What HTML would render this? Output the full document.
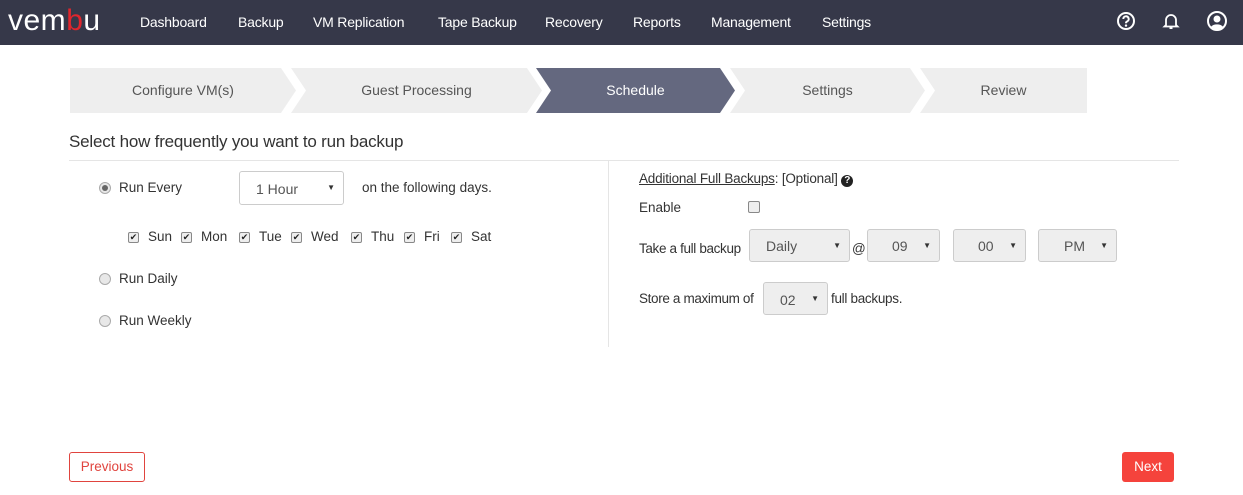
<!DOCTYPE html>
<html><head><style>
*{box-sizing:border-box;margin:0;padding:0}
body{width:1243px;height:495px;background:#fff;font-family:"Liberation Sans",sans-serif;color:#333;position:relative;overflow:hidden;font-size:13.5px}
.nav{position:absolute;left:0;top:0;width:1243px;height:45px;background:#363849}
.nav .it{position:absolute;top:14px;color:#fff;font-size:14px;letter-spacing:-0.2px}
.logo{position:absolute;left:8px;top:4px;color:#fff;font-size:30px;letter-spacing:0.5px}
.st{position:absolute;top:68px;height:45px;background:#eeeeee;color:#555;font-size:14px;line-height:45px;text-align:center}
.a{position:absolute}
.sel{position:absolute;border:1px solid #ccc;border-radius:3px;background:#eee;font-size:14px;color:#555}
.sel:after{content:"▼";position:absolute;right:8px;top:11px;font-size:8px;color:#333}
.cb{position:absolute;width:11px;height:11px;border:1px solid #888;border-radius:2px;background:#eee;font-size:9px;line-height:9px;text-align:center;color:#222}
.rd{position:absolute;width:12px;height:12px;border-radius:50%;border:1px solid #aaa;background:#e8e8e8}
</style></head><body>
<div class="nav">
<div class="logo">vem<span style="color:#e0262d">b</span>u</div>
<span class="it" style="left:140px">Dashboard</span>
<span class="it" style="left:238px">Backup</span>
<span class="it" style="left:313px">VM Replication</span>
<span class="it" style="left:438px">Tape Backup</span>
<span class="it" style="left:545px">Recovery</span>
<span class="it" style="left:633px">Reports</span>
<span class="it" style="left:711px">Management</span>
<span class="it" style="left:822px">Settings</span>
<svg class="a" style="left:1116px;top:11px" width="20" height="20" viewBox="0 0 20 20"><circle cx="10" cy="10" r="8" fill="none" stroke="#fff" stroke-width="2"/><path d="M7.3 8a2.7 2.7 0 1 1 3.7 2.5c-.8.4-1 .8-1 1.7" fill="none" stroke="#fff" stroke-width="2"/><circle cx="10" cy="14.6" r="1.2" fill="#fff"/></svg>
<svg class="a" style="left:1162px;top:11px" width="18" height="20" viewBox="0 0 18 20"><path d="M4 14V9a5 5 0 0 1 10 0v5l1.5 1.5h-13z" fill="none" stroke="#fff" stroke-width="1.8"/><path d="M7.5 17h3" stroke="#fff" stroke-width="2"/></svg>
<svg class="a" style="left:1206px;top:10px" width="22" height="22" viewBox="0 0 22 22"><circle cx="11" cy="11" r="9" fill="none" stroke="#fff" stroke-width="2"/><circle cx="11" cy="9" r="3.5" fill="#fff"/><path d="M4.8 17a7 5 0 0 1 12.4 0a9 9 0 0 1-12.4 0z" fill="#fff"/></svg>
</div>

<div class="st" style="left:70px;width:226px;clip-path:polygon(0 0,211px 0,226px 50%,211px 100%,0 100%)">Configure VM(s)</div>
<div class="st" style="left:291px;width:251px;clip-path:polygon(0 0,236px 0,251px 50%,236px 100%,0 100%,15px 50%)">Guest Processing</div>
<div class="st" style="left:536px;width:199px;background:#64687f;color:#fff;clip-path:polygon(0 0,184px 0,199px 50%,184px 100%,0 100%,15px 50%)">Schedule</div>
<div class="st" style="left:730px;width:195px;clip-path:polygon(0 0,180px 0,195px 50%,180px 100%,0 100%,15px 50%)">Settings</div>
<div class="st" style="left:920px;width:167px;clip-path:polygon(0 0,167px 0,167px 100%,0 100%,15px 50%)">Review</div>

<div class="a" style="left:69px;top:132px;font-size:17px;color:#333;letter-spacing:-0.2px">Select how frequently you want to run backup</div>
<div class="a" style="left:69px;top:160px;width:1110px;height:1px;background:#e5e5e5"></div>
<div class="a" style="left:608px;top:161px;width:1px;height:186px;background:#e5e5e5"></div>

<div class="rd" style="left:99px;top:182px"><div style="width:6px;height:6px;border-radius:50%;background:#666;margin:2px"></div></div>
<div class="a" style="left:119px;top:180px">Run Every</div>
<div class="sel" style="left:239px;top:171px;width:105px;height:34px;background:#fff;padding:9px 0 0 16px">1 Hour</div>
<div class="a" style="left:362px;top:180px">on the following days.</div>

<span class="cb" style="left:128px;top:232px">✔</span><span class="a" style="left:148px;top:229px">Sun</span>
<span class="cb" style="left:181px;top:232px">✔</span><span class="a" style="left:201px;top:229px">Mon</span>
<span class="cb" style="left:239px;top:232px">✔</span><span class="a" style="left:259px;top:229px">Tue</span>
<span class="cb" style="left:291px;top:232px">✔</span><span class="a" style="left:311px;top:229px">Wed</span>
<span class="cb" style="left:351px;top:232px">✔</span><span class="a" style="left:371px;top:229px">Thu</span>
<span class="cb" style="left:404px;top:232px">✔</span><span class="a" style="left:424px;top:229px">Fri</span>
<span class="cb" style="left:451px;top:232px">✔</span><span class="a" style="left:471px;top:229px">Sat</span>

<div class="rd" style="left:99px;top:273px"></div>
<div class="a" style="left:119px;top:271px">Run Daily</div>
<div class="rd" style="left:99px;top:315px"></div>
<div class="a" style="left:119px;top:313px">Run Weekly</div>

<div class="a" style="left:639px;top:171px;letter-spacing:-0.2px"><u>Additional Full Backups</u>: [Optional] <span style="display:inline-block;width:12px;height:12px;border-radius:50%;background:#222;color:#fff;font-size:10px;line-height:12px;text-align:center;font-weight:bold">?</span></div>
<div class="a" style="left:639px;top:200px">Enable</div>
<span class="cb" style="left:748px;top:201px;width:12px;height:12px"></span>
<div class="a" style="left:639px;top:241px;letter-spacing:-0.35px">Take a full backup</div>
<div class="sel" style="left:749px;top:229px;width:101px;height:33px;padding:8px 0 0 16px">Daily</div>
<div class="a" style="left:852px;top:241px">@</div>
<div class="sel" style="left:867px;top:229px;width:73px;height:33px;padding:8px 0 0 24px">09</div>
<div class="sel" style="left:953px;top:229px;width:73px;height:33px;padding:8px 0 0 24px">00</div>
<div class="sel" style="left:1038px;top:229px;width:79px;height:33px;padding:8px 0 0 25px">PM</div>
<div class="a" style="left:639px;top:291px;letter-spacing:-0.35px">Store a maximum of</div>
<div class="sel" style="left:763px;top:282px;width:65px;height:33px;padding:9px 0 0 16px">02</div>
<div class="a" style="left:831px;top:291px;letter-spacing:-0.3px">full backups.</div>

<div class="a" style="left:69px;top:452px;width:76px;height:30px;border:1px solid #e0443e;border-radius:3px;color:#e0443e;text-align:center;line-height:28px">Previous</div>
<div class="a" style="left:1122px;top:452px;width:52px;height:30px;background:#f5433c;border-radius:3px;color:#fff;text-align:center;line-height:30px">Next</div>
</body></html>
